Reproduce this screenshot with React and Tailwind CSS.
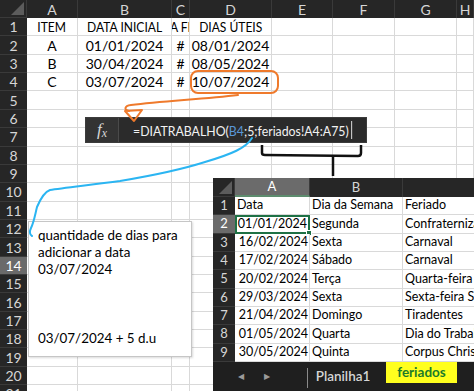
const FONT = "font-['Lato','Open_Sans',sans-serif]";

const mainCols = ["A", "B", "C", "D", "E", "F", "G", "H"];
const mainData = [
  ["ITEM", "DATA INICIAL", "DATA FINAL", "DIAS ÚTEIS"],
  ["A", "01/01/2024", "#", "08/01/2024"],
  ["B", "30/04/2024", "#", "08/05/2024"],
  ["C", "03/07/2024", "#", "10/07/2024"],
];

const feriados = [
  ["Data", "Dia da Semana", "Feriado"],
  ["01/01/2024", "Segunda", "Confraternização Universal"],
  ["16/02/2024", "Sexta", "Carnaval"],
  ["17/02/2024", "Sábado", "Carnaval"],
  ["20/02/2024", "Terça", "Quarta-feira de Cinzas"],
  ["29/03/2024", "Sexta", "Sexta-feira Santa"],
  ["21/04/2024", "Domingo", "Tiradentes"],
  ["01/05/2024", "Quarta", "Dia do Trabalho"],
  ["30/05/2024", "Quinta", "Corpus Christi"],
];

function Corner() {
  return (
    <div className="relative bg-[#262626] border-r border-b border-[#3a3a3a]">
      <div className="absolute right-[2px] bottom-[2px] w-0 h-0 border-l-[13px] border-l-transparent border-b-[13px] border-b-[#5c5c5c]" />
    </div>
  );
}

function MainSheet() {
  const rows = Array.from({ length: 21 }, (_, i) => i + 1);
  return (
    <div className="grid grid-cols-[27px_51px_94px_18px_82px_61px_62px_62px_1fr] grid-rows-[18px_repeat(21,18.37px)] text-[14px] text-black">
      <Corner />
      {mainCols.map(c => (
        <div key={c} className="flex items-center justify-center bg-[#262626] text-[#d6d6d6] border-r border-[#3a3a3a] text-[14px]">{c}</div>
      ))}
      {rows.map(r => (
        <Row key={r} r={r} />
      ))}
    </div>
  );
}

function Row({ r }) {
  const data = mainData[r - 1] || [];
  const sel = r === 14;
  return (
    <>
      <div className={`flex items-center justify-center border-b border-[#3a3a3a] text-[14px] ${sel ? "bg-[#6a6a6a] text-white" : "bg-[#262626] text-[#d6d6d6]"}`}>{r}</div>
      {mainCols.map((c, i) => (
        <div key={c} className="flex items-center justify-center overflow-hidden whitespace-nowrap bg-white border-r border-b border-[#d9d9d9]">
          {r === 1 && data[i] ? <span className="shrink-0 scale-x-[0.86]">{data[i]}</span> : data[i] || ""}
        </div>
      ))}
    </>
  );
}

function FormulaBar() {
  return (
    <div className="absolute left-[85px] top-[117px] w-[282px] h-[26px] flex overflow-hidden bg-[#2b2b2b] border border-[#3c3c3c]">
      <div className="w-[33px] shrink-0 flex items-center justify-center bg-[#333333] border-r border-[#4a4a4a] text-[#d8d8d8] font-['Liberation_Serif',serif] italic text-[17px]">
        f<span className="text-[12px] mt-[5px]">x</span>
      </div>
      <div className="flex items-center pl-[14px] text-[14px] text-[#f2f2f2] whitespace-nowrap">
        <span className="origin-left scale-x-[0.88] flex items-center">
          =DIATRABALHO(<span className="text-[#5a97d8]">B4</span>;5;feriados!A4:A75)
          <span className="ml-[3px] w-[1px] h-[18px] bg-[#f2f2f2]" />
        </span>
      </div>
    </div>
  );
}

function FeriadosSheet() {
  const rows = feriados.map((d, i) => ({ n: i + 1, d }));
  return (
    <div className="absolute left-[213px] top-[178px] right-0 bottom-0 flex flex-col bg-[#1f1f1f] text-[12.5px] text-black">
      <div className="grid grid-cols-[22px_75px_93px_1fr] grid-rows-[19px_repeat(9,18.33px)]">
        <Corner />
        <div className="flex items-center justify-center bg-[#6b6b6b] text-white border-r border-b-2 border-[#3a3a3a] border-b-[#5d8c6e] text-[13px]">A</div>
        <div className="flex items-center justify-center bg-[#262626] text-[#d6d6d6] border-r border-[#3a3a3a] text-[13px]">B</div>
        <div className="bg-[#262626]" />
        {rows.map(({ n, d }) => (
          <FRow key={n} n={n} d={d} />
        ))}
      </div>
      <div className="flex-1 flex items-start bg-[#1f1f1f]">
        <div className="w-[94px] shrink-0 h-full flex items-center pl-[25px] gap-[20px] text-[#9a9a9a] text-[8px]">
          <span>◀</span>
          <span>▶</span>
        </div>
        <div className="mt-[6px] w-[1px] h-[20px] bg-[#8a8a8a]" />
        <div className="w-[70px] shrink-0 h-full flex items-center justify-center text-[#d6d6d6] font-semibold text-[13.5px]">Planilha1</div>
        <div className="ml-[8px] w-[71px] shrink-0 h-[21px] flex items-center justify-center bg-[#ffff1e] text-[#1a7a2a] font-bold text-[13.5px]">feriados</div>
      </div>
    </div>
  );
}

function FRow({ n, d }) {
  const sel = n === 2;
  const isHeader = n === 1;
  return (
    <>
      <div className={`flex items-center justify-center border-b border-[#3a3a3a] text-[13px] ${sel ? "bg-[#6b6b6b] text-white" : "bg-[#262626] text-[#d6d6d6]"}`}>{n}</div>
      <div className={`relative flex items-center whitespace-nowrap bg-white ${sel ? "border-2 border-[#1e7145]" : "border-r border-b border-[#d9d9d9]"} ${isHeader ? "justify-start pl-[2px]" : "justify-end pr-[1px]"}`}>
        {d[0]}
        {sel && <div className="absolute right-[-4px] bottom-[-4px] w-[6px] h-[6px] bg-[#1e7145] border border-white" />}
      </div>
      <div className="flex items-center pl-[2px] whitespace-nowrap overflow-hidden bg-white border-r border-b border-[#d9d9d9]">{d[1]}</div>
      <div className="flex items-center pl-[2px] whitespace-nowrap overflow-hidden bg-white border-b border-[#d9d9d9]">{d[2]}</div>
    </>
  );
}

function Callout() {
  return (
    <div className="absolute left-[28px] top-[221px] w-[164px] h-[136px] flex flex-col bg-white border border-[#c6c6c6] shadow-[1px_1px_2px_rgba(0,0,0,0.15)] pl-[9px] pt-[5px] pb-[9px] text-[13.4px] leading-[17px] text-black">
      <p>quantidade de dias para</p>
      <p>adicionar a data</p>
      <p>03/07/2024</p>
      <p className="mt-auto">03/07/2024 + 5 d.u</p>
    </div>
  );
}

function Annotations() {
  return (
    <svg className="absolute inset-0 pointer-events-none" width="474" height="391" viewBox="0 0 474 391" fill="none">
      {/* orange highlight around result */}
      <rect x="191" y="71" width="87" height="22" rx="7" stroke="#ef7a2c" strokeWidth="2" />
      <path d="M238 95 C205 99 165 101 131 105 C124 106 124 110 129 111" stroke="#ef7a2c" strokeWidth="2" strokeLinecap="round" />
      <path d="M125 111 L142 110 L134 121 Z" stroke="#ef7a2c" strokeWidth="2" strokeLinejoin="round" />
      {/* blue pointer from B4 to note */}
      <path d="M252 138 C246 148 232 154 205 162 C180 170 150 176 120 181 C90 185 62 188 50 190 C44 192 40 200 37 207 C35 215 34 222 31 228 C29 232 30 235 32 236" stroke="#2bb5f2" strokeWidth="2" strokeLinecap="round" />
      {/* black bracket under range */}
      <path d="M262 145 L262 153 Q262 155 265 155 L358 156 Q361 156 361 153 L361 145" stroke="#111" strokeWidth="2.5" strokeLinejoin="round" />
      <path d="M333 157 L333 176" stroke="#111" strokeWidth="2.5" />
    </svg>
  );
}

export default function App() {
  return (
    <div className={`relative w-[474px] h-[391px] overflow-hidden bg-white ${FONT}`}>
      <MainSheet />
      <FormulaBar />
      <Callout />
      <FeriadosSheet />
      <Annotations />
    </div>
  );
}
